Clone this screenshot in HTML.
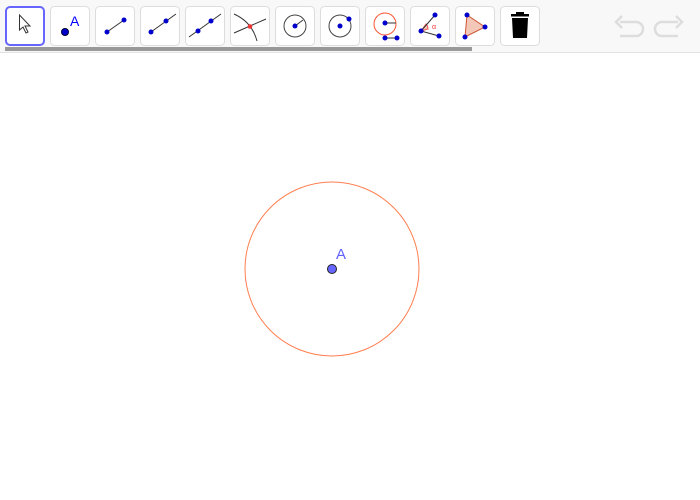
<!DOCTYPE html>
<html><head><meta charset="utf-8"><style>
html,body{margin:0;padding:0;background:#fff;width:700px;height:500px;overflow:hidden;font-family:"Liberation Sans",sans-serif}
</style></head><body>
<svg width="700" height="500" xmlns="http://www.w3.org/2000/svg" font-family="Liberation Sans, sans-serif">
<rect x="0" y="0" width="700" height="52" fill="#f8f8f8"/>
<line x1="0" y1="52.5" x2="700" y2="52.5" stroke="#e2e2e2"/>
<rect x="5" y="47" width="467" height="4" fill="#999"/>
<g fill="#fff" stroke="#ddd">
<rect x="50.5" y="6.5" width="39" height="39" rx="4"/>
<rect x="95.5" y="6.5" width="39" height="39" rx="4"/>
<rect x="140.5" y="6.5" width="39" height="39" rx="4"/>
<rect x="185.5" y="6.5" width="39" height="39" rx="4"/>
<rect x="230.5" y="6.5" width="39" height="39" rx="4"/>
<rect x="275.5" y="6.5" width="39" height="39" rx="4"/>
<rect x="320.5" y="6.5" width="39" height="39" rx="4"/>
<rect x="365.5" y="6.5" width="39" height="39" rx="4"/>
<rect x="410.5" y="6.5" width="39" height="39" rx="4"/>
<rect x="455.5" y="6.5" width="39" height="39" rx="4"/>
<rect x="500.5" y="6.5" width="39" height="39" rx="4"/>
</g>
<rect x="6" y="7" width="38" height="38" rx="4" fill="#fff" stroke="#6666ff" stroke-width="2"/>
<!-- move arrow -->
<path d="M19.5 15 L19.5 30 L23 27 L26 33 L28 32 L25 26 L30 26 Z" fill="#fff" stroke="#333" stroke-width="1"/>
<!-- point -->
<circle cx="65" cy="32" r="3.5" fill="#00c" stroke="#003"/>
<text x="70" y="26" font-size="14" fill="#00f">A</text>
<!-- segment -->
<line x1="107" y1="32" x2="124" y2="20" stroke="#333"/>
<circle cx="107" cy="32" r="2.5" fill="#00c"/><circle cx="124" cy="20" r="2.5" fill="#00c"/>
<!-- ray -->
<line x1="151" y1="32" x2="176" y2="14" stroke="#333"/>
<circle cx="151" cy="32" r="2.5" fill="#00c"/><circle cx="166" cy="21" r="2.5" fill="#00c"/>
<!-- line -->
<line x1="189" y1="37" x2="221" y2="14" stroke="#333"/>
<circle cx="198" cy="31" r="2.5" fill="#00c"/><circle cx="211" cy="21" r="2.5" fill="#00c"/>
<!-- intersect -->
<line x1="234" y1="33" x2="266" y2="19" stroke="#333"/>
<path d="M234 14 Q252 22 257 41" fill="none" stroke="#333"/>
<circle cx="250" cy="26.5" r="2.3" fill="#e33"/>
<!-- circle center through point -->
<circle cx="295" cy="26" r="11" fill="none" stroke="#444"/>
<line x1="295" y1="26" x2="303" y2="20" stroke="#333"/>
<circle cx="295" cy="26" r="2.5" fill="#00c"/>
<circle cx="340" cy="26" r="11" fill="none" stroke="#444"/>
<circle cx="340" cy="26" r="2.5" fill="#00c"/><circle cx="349" cy="19" r="2.5" fill="#00c"/>
<!-- circle radius -->
<circle cx="385" cy="24" r="11" fill="none" stroke="#f53"/>
<line x1="385" y1="23" x2="396" y2="23" stroke="#333"/>
<circle cx="385" cy="23" r="2.5" fill="#00c"/>
<line x1="385" y1="38" x2="397" y2="38" stroke="#333"/>
<circle cx="385" cy="38" r="2.5" fill="#00c"/><circle cx="397" cy="38" r="2.5" fill="#00c"/>
<!-- angle -->
<path d="M421 31 L428 29 A7 7 0 0 0 426 24 Z" fill="#f7c8b8" stroke="#e55"/>
<line x1="421" y1="31" x2="435" y2="15" stroke="#333"/><line x1="421" y1="31" x2="439" y2="36" stroke="#333"/>
<circle cx="421" cy="31" r="2.5" fill="#00c"/><circle cx="435" cy="15" r="2.5" fill="#00c"/><circle cx="439" cy="36" r="2.5" fill="#00c"/>
<text x="432" y="29" font-size="7" fill="#e33">α</text>
<!-- polygon -->
<path d="M467 15 L485 27 L465 37 Z" fill="#f4c8b8" stroke="#c53"/>
<circle cx="467" cy="15" r="2.5" fill="#00c"/><circle cx="485" cy="27" r="2.5" fill="#00c"/><circle cx="465" cy="37" r="2.5" fill="#00c"/>
<!-- trash -->
<rect x="511" y="14" width="18" height="2.5" fill="#000"/>
<rect x="516" y="12" width="8" height="3" fill="#000"/>
<path d="M512 18 L528 18 L527 38 L513 38 Z" fill="#000"/>
<!-- undo/redo -->
<path d="M620 22 L636 22 A7 7 0 0 1 636 36 L620 36" fill="none" stroke="#ddd" stroke-width="2.5"/>
<path d="M622 16 L616 22 L622 28" fill="none" stroke="#ddd" stroke-width="2.5"/>
<path d="M678 22 L662 22 A7 7 0 0 0 662 36 L678 36" fill="none" stroke="#ddd" stroke-width="2.5"/>
<path d="M676 16 L682 22 L676 28" fill="none" stroke="#ddd" stroke-width="2.5"/>
<!-- canvas -->
<circle cx="332" cy="269" r="87" fill="none" stroke="#ff7f50" stroke-width="1"/>
<circle cx="332" cy="269" r="4.5" fill="#6666ff" stroke="#222" stroke-width="1"/>
<text x="336" y="259" font-size="15" fill="#6060ff">A</text>
</svg>
</body></html>
